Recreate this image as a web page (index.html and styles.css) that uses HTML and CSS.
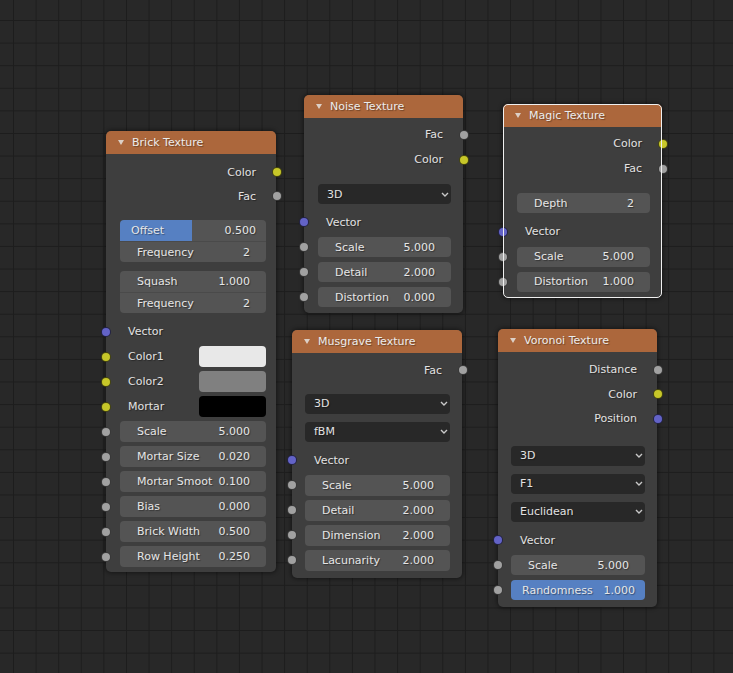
FILE: index.html
```html
<!DOCTYPE html>
<html>
<head>
<meta charset="utf-8">
<title>Node Editor</title>
<link rel="stylesheet" href="styles.css">
</head>
<body>
<div class="canvas">

  <div class="node n-brick">
    <div class="hdr"><span class="tri"></span><span class="title">Brick Texture</span></div>
    <div class="body">
      <div class="row out h24">Color<span class="sock r yel"></span></div>
      <div class="row out h24">Fac<span class="sock r gry"></span></div>
      <div class="grp mt12">
        <div class="field slider" style="--p:49%"><span>Offset</span><span>0.500</span></div>
        <div class="field"><span>Frequency</span><span>2</span></div>
      </div>
      <div class="grp mt9">
        <div class="field"><span>Squash</span><span>1.000</span></div>
        <div class="field"><span>Frequency</span><span>2</span></div>
      </div>
      <div class="row in mt6">Vector<span class="sock l vec"></span></div>
      <div class="row in">Color1<span class="swatch sw1"></span><span class="sock l yel"></span></div>
      <div class="row in">Color2<span class="swatch sw2"></span><span class="sock l yel"></span></div>
      <div class="row in">Mortar<span class="swatch sw3"></span><span class="sock l yel"></span></div>
      <div class="row f"><span class="sock l gry"></span><div class="field"><span>Scale</span><span>5.000</span></div></div>
      <div class="row f"><span class="sock l gry"></span><div class="field"><span>Mortar Size</span><span>0.020</span></div></div>
      <div class="row f"><span class="sock l gry"></span><div class="field"><span>Mortar Smoot</span><span>0.100</span></div></div>
      <div class="row f"><span class="sock l gry"></span><div class="field"><span>Bias</span><span>0.000</span></div></div>
      <div class="row f"><span class="sock l gry"></span><div class="field"><span>Brick Width</span><span>0.500</span></div></div>
      <div class="row f"><span class="sock l gry"></span><div class="field"><span>Row Height</span><span>0.250</span></div></div>
    </div>
  </div>

  <div class="node n-noise small">
    <div class="hdr"><span class="tri"></span><span class="title">Noise Texture</span></div>
    <div class="body">
      <div class="row out">Fac<span class="sock r gry"></span></div>
      <div class="row out">Color<span class="sock r yel"></span></div>
      <div class="dd mt12"><span>3D</span><svg class="chev" width="8" height="5" viewBox="0 0 8 5"><polyline points="1,1 4,4 7,1"/></svg></div>
      <div class="row in mt5">Vector<span class="sock l vec"></span></div>
      <div class="row f"><span class="sock l gry"></span><div class="field"><span>Scale</span><span>5.000</span></div></div>
      <div class="row f"><span class="sock l gry"></span><div class="field"><span>Detail</span><span>2.000</span></div></div>
      <div class="row f"><span class="sock l gry"></span><div class="field"><span>Distortion</span><span>0.000</span></div></div>
    </div>
  </div>

  <div class="node n-magic small selected">
    <div class="hdr"><span class="tri"></span><span class="title">Magic Texture</span></div>
    <div class="body">
      <div class="row out">Color<span class="sock r yel"></span></div>
      <div class="row out">Fac<span class="sock r gry"></span></div>
      <div class="solo mt12"><div class="field"><span>Depth</span><span>2</span></div></div>
      <div class="row in mt6">Vector<span class="sock l vec"></span></div>
      <div class="row f"><span class="sock l gry"></span><div class="field"><span>Scale</span><span>5.000</span></div></div>
      <div class="row f"><span class="sock l gry"></span><div class="field"><span>Distortion</span><span>1.000</span></div></div>
    </div>
  </div>

  <div class="node n-musgrave">
    <div class="hdr"><span class="tri"></span><span class="title">Musgrave Texture</span></div>
    <div class="body">
      <div class="row out">Fac<span class="sock r gry"></span></div>
      <div class="dd mt11"><span>3D</span><svg class="chev" width="8" height="5" viewBox="0 0 8 5"><polyline points="1,1 4,4 7,1"/></svg></div>
      <div class="dd mt8"><span>fBM</span><svg class="chev" width="8" height="5" viewBox="0 0 8 5"><polyline points="1,1 4,4 7,1"/></svg></div>
      <div class="row in mt6">Vector<span class="sock l vec"></span></div>
      <div class="row f"><span class="sock l gry"></span><div class="field"><span>Scale</span><span>5.000</span></div></div>
      <div class="row f"><span class="sock l gry"></span><div class="field"><span>Detail</span><span>2.000</span></div></div>
      <div class="row f"><span class="sock l gry"></span><div class="field"><span>Dimension</span><span>2.000</span></div></div>
      <div class="row f"><span class="sock l gry"></span><div class="field"><span>Lacunarity</span><span>2.000</span></div></div>
    </div>
  </div>

  <div class="node n-voronoi small">
    <div class="hdr"><span class="tri"></span><span class="title">Voronoi Texture</span></div>
    <div class="body">
      <div class="row out h245">Distance<span class="sock r gry"></span></div>
      <div class="row out h245">Color<span class="sock r yel"></span></div>
      <div class="row out h245">Position<span class="sock r vec"></span></div>
      <div class="dd mt145"><span>3D</span><svg class="chev" width="8" height="5" viewBox="0 0 8 5"><polyline points="1,1 4,4 7,1"/></svg></div>
      <div class="dd mt8"><span>F1</span><svg class="chev" width="8" height="5" viewBox="0 0 8 5"><polyline points="1,1 4,4 7,1"/></svg></div>
      <div class="dd mt8"><span>Euclidean</span><svg class="chev" width="8" height="5" viewBox="0 0 8 5"><polyline points="1,1 4,4 7,1"/></svg></div>
      <div class="row in mt6">Vector<span class="sock l vec"></span></div>
      <div class="row f"><span class="sock l gry"></span><div class="field"><span>Scale</span><span>5.000</span></div></div>
      <div class="row f"><span class="sock l gry"></span><div class="field slider" style="--p:100%"><span>Randomness</span><span>1.000</span></div></div>
    </div>
  </div>

</div>
</body>
</html>
```

FILE: styles.css
```css
* { box-sizing: border-box; }
html, body { margin: 0; padding: 0; }
body {
  width: 733px;
  height: 673px;
  overflow: hidden;
  background: #282828;
  font-family: "DejaVu Sans", "Liberation Sans", sans-serif;
  font-size: 11px;
  color: #e2e2e2;
}
.canvas {
  position: relative;
  width: 733px;
  height: 673px;
  background-color: #282828;
  background-image:
    linear-gradient(to right, #1d1d1d 1px, transparent 1px),
    linear-gradient(to bottom, #1d1d1d 1px, transparent 1px);
  background-size: 22.6px 22.6px;
  background-position: 13px 20px;
}

/* nodes on the canvas */
.node {
  position: absolute;
  background: #3e3e3e;
  border-radius: 5px;
  box-shadow: 0 0 4px 1px rgba(0, 0, 0, 0.45);
}
.n-brick { left: 106px; top: 131px; width: 170px; }
.n-noise { left: 304px; top: 95px; width: 159px; }
.n-magic { left: 503px; top: 104px; width: 159px; }
.n-musgrave { left: 292px; top: 329.5px; width: 170px; }
.n-voronoi { left: 498px; top: 328.5px; width: 159px; }

.node.selected::after {
  content: "";
  position: absolute;
  inset: 0;
  border: 1px solid #efefef;
  border-radius: 5px;
  pointer-events: none;
}

.hdr {
  height: 23px;
  background: #ac673c;
  border-radius: 5px 5px 0 0;
  display: flex;
  align-items: center;
  color: #ececec;
  text-shadow: 1px 1px 1px rgba(0, 0, 0, 0.35);
}
.tri {
  width: 0;
  height: 0;
  margin-left: 11.5px;
  border-left: 3.5px solid transparent;
  border-right: 3.5px solid transparent;
  border-top: 5px solid #dccfc6;
}
.title { margin-left: 8.5px; }

.body {
  display: flex;
  flex-direction: column;
}
.n-brick .body { padding: 6px 0 3px; }
.n-noise .body { padding: 4px 0 3px; }
.n-magic .body { padding: 4px 0 4px; }
.n-musgrave .body { padding: 5px 0 5px; }
.n-voronoi .body { padding: 6px 0 4.5px; }

/* rows */
.row {
  position: relative;
  display: flex;
  align-items: center;
  height: 25px;
  text-shadow: 1px 1px 1px rgba(0, 0, 0, 0.4);
}
.row.h24 { height: 24px; }
.row.h245 { height: 24.5px; }
.row.out { justify-content: flex-end; padding-right: 20px; }
.row.in { padding-left: 22px; }
.row.f { padding: 0 12px 0 14px; }
.n-brick .row.f { padding: 0 10px 0 14px; }
.n-musgrave .row.f, .n-voronoi .row.f { padding: 0 12px 0 13px; }

/* sockets */
.sock {
  position: absolute;
  top: 50%;
  width: 10px;
  height: 10px;
  margin-top: -5px;
  border-radius: 50%;
  border: 1px solid rgba(0, 0, 0, 0.65);
}
.sock.l { left: -5px; }
.sock.r { right: -5.5px; }
.yel { background: #c7c729; }
.gry { background: #a1a1a1; }
.vec { background: #6363c7; }

/* number fields */
.field {
  flex: 1;
  height: 21px;
  display: flex;
  align-items: center;
  justify-content: space-between;
  padding: 0 16px 0 17px;
  background: #545454;
  border-radius: 4px;
  color: #e6e6e6;
  white-space: nowrap;
  text-shadow: 1px 1px 1px rgba(0, 0, 0, 0.4);
}
.small .field { height: 20px; }
.field.slider {
  padding: 0 10px 0 11px;
  background: linear-gradient(to right, #5680c2 var(--p), #545454 var(--p));
}

.grp {
  display: flex;
  flex-direction: column;
  margin-left: 14px;
  margin-right: 10px;
  border-radius: 4px;
  overflow: hidden;
}
.grp .field { border-radius: 0; flex: none; }
.grp .field + .field { border-top: 1px solid #4a4a4a; }

.solo {
  display: flex;
  padding: 0 12px 0 14px;
}

/* colour swatches */
.swatch {
  margin-left: auto;
  margin-right: 10px;
  width: 67px;
  height: 21px;
  border-radius: 4px;
}
.sw1 { background: #e8e8e8; }
.sw2 { background: #808080; }
.sw3 { background: #000000; }

/* dropdowns */
.dd {
  height: 20px;
  display: flex;
  align-items: center;
  justify-content: space-between;
  margin-left: 14px;
  margin-right: 12px;
  padding: 0 2.5px 0 9px;
  background: #282828;
  border-radius: 4px;
  color: #e2e2e2;
  text-shadow: 1px 1px 1px rgba(0, 0, 0, 0.4);
}
.n-musgrave .dd, .n-voronoi .dd { margin-left: 13px; }
.chev {
  display: block;
  fill: none;
  stroke: #c8c8c8;
  stroke-width: 1.4;
}

/* vertical spacing between sections */
.mt5 { margin-top: 5.5px; }
.mt6 { margin-top: 6px; }
.mt8 { margin-top: 8px; }
.mt9 { margin-top: 9px; }
.mt11 { margin-top: 11px; }
.mt12 { margin-top: 12px; }
.mt145 { margin-top: 14.5px; }
```
